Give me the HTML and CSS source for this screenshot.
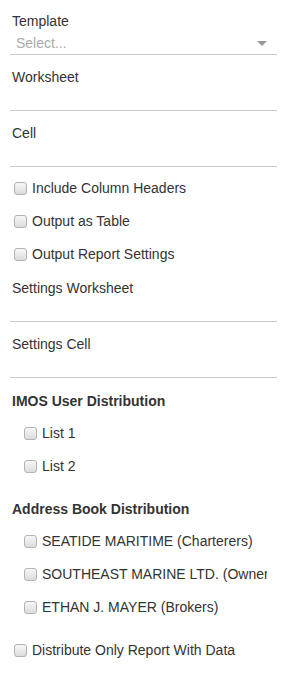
FILE: index.html
```html
<!DOCTYPE html>
<html lang="en">
<head>
  <meta charset="UTF-8">
  <meta name="viewport" content="width=device-width, initial-scale=1.0">
  <title>Report Output</title>
  <link rel="stylesheet" href="styles.css">
</head>
<body>
  <div class="panel">
    <div class="field">
      <label>Template</label>
      <div class="select">
        <span class="placeholder">Select...</span>
        <span class="arrow"></span>
      </div>
    </div>

    <div class="field">
      <label>Worksheet</label>
      <input type="text">
    </div>

    <div class="field">
      <label>Cell</label>
      <input type="text">
    </div>

    <label class="check"><input type="checkbox"><span>Include Column Headers</span></label>
    <label class="check"><input type="checkbox"><span>Output as Table</span></label>
    <label class="check"><input type="checkbox"><span>Output Report Settings</span></label>

    <div class="field">
      <label>Settings Worksheet</label>
      <input type="text">
    </div>

    <div class="field">
      <label>Settings Cell</label>
      <input type="text">
    </div>

    <div class="group">
      <h4>IMOS User Distribution</h4>
      <label class="check sub"><input type="checkbox"><span>List 1</span></label>
      <label class="check sub"><input type="checkbox"><span>List 2</span></label>
    </div>

    <div class="group">
      <h4>Address Book Distribution</h4>
      <label class="check sub"><input type="checkbox"><span>SEATIDE MARITIME (Charterers)</span></label>
      <label class="check sub"><input type="checkbox"><span>SOUTHEAST MARINE LTD. (Owners)</span></label>
      <label class="check sub"><input type="checkbox"><span>ETHAN J. MAYER (Brokers)</span></label>
    </div>

    <label class="check"><input type="checkbox"><span>Distribute Only Report With Data</span></label>
  </div>
</body>
</html>
```

FILE: styles.css
```css
* {
  margin: 0;
  padding: 0;
  box-sizing: border-box;
}
body {
  background: #fff;
  color: #333;
  font-family: "Liberation Sans", Arial, sans-serif;
  font-size: 14px;
}
.panel {
  width: 287px;
  padding: 10px 10px 0 10px;
}
.field {
  margin-bottom: 11px;
}
.field label {
  display: block;
  height: 21px;
  line-height: 20px;
  padding: 1px 0 0 2px;
}
.field input[type="text"], .select {
  display: block;
  width: 100%;
  height: 24px;
  border: none;
  border-bottom: 1px solid #ccc;
  background: transparent;
  font: inherit;
  outline: none;
}
.select {
  display: flex;
  align-items: center;
  justify-content: space-between;
  padding: 0 10px 0 6px;
}
.placeholder {
  color: #aaa;
}
.arrow {
  width: 0;
  height: 0;
  border-left: 5px solid transparent;
  border-right: 5px solid transparent;
  border-top: 5px solid #999;
  margin-top: 2px;
}
.check {
  display: flex;
  align-items: center;
  height: 20px;
  margin-bottom: 13px;
  padding-left: 4px;
  white-space: nowrap;
  overflow: hidden;
}
.check.sub {
  padding-left: 14px;
  margin-right: 10px;
}
.check input {
  appearance: none;
  -webkit-appearance: none;
  flex: none;
  width: 13px;
  height: 13px;
  border: 1px solid #b3b3b3;
  border-radius: 3px;
  background: linear-gradient(#f7f7f7, #dcdcdc);
  margin-right: 5px;
}
.group {
  padding-bottom: 8px;
}
.group h4 {
  font-size: 14px;
  font-weight: bold;
  line-height: 24px;
  padding-left: 2px;
  margin-bottom: 10px;
}
.group + .check {
  margin-top: 2px;
}
```
